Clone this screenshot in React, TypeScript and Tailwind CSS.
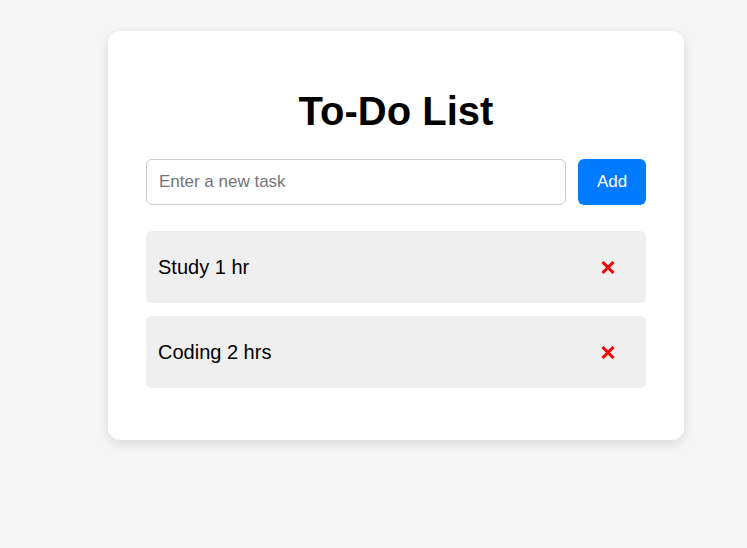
import { useState } from 'react';

const initialTasks = ['Study 1 hr', 'Coding 2 hrs'];

export default function App() {
  const [tasks, setTasks] = useState<string[]>(initialTasks);
  const [text, setText] = useState('');

  const addTask = () => {
    if (!text.trim()) return;
    setTasks([...tasks, text.trim()]);
    setText('');
  };

  return (
    <div className="min-h-[548px] bg-[#f6f6f6] pt-[31px] font-['Liberation_Sans',Arial,sans-serif] text-black">
      <div className="ml-[108px] w-[576px] rounded-xl bg-white px-[38px] pt-[57px] pb-[52px] shadow-[0_4px_12px_rgba(0,0,0,0.12)]">
        <h1 className="mb-[25px] text-center text-[40px] font-bold leading-[46px]">To-Do List</h1>

        <div className="mb-[26px] flex gap-3">
          <input
            value={text}
            onChange={(e) => setText(e.target.value)}
            placeholder="Enter a new task"
            className="h-[46px] flex-1 rounded-md border border-[#cccccc] bg-white px-3 text-[17px] outline-none placeholder:text-[#757575]"
          />
          <button
            onClick={addTask}
            className="h-[46px] w-[68px] rounded-md bg-[#007bff] text-[17px] text-white"
          >
            Add
          </button>
        </div>

        <ul className="flex flex-col gap-[13px]">
          {tasks.map((task, i) => (
            <li
              key={i}
              className="flex h-[72px] items-center justify-between rounded-md bg-[#efefef] pl-3 pr-[31px] text-[20px]"
            >
              <span>{task}</span>
              <button
                onClick={() => setTasks(tasks.filter((_, j) => j !== i))}
                className="flex h-[14px] w-[14px] items-center justify-center"
              >
                <svg width="14" height="13" viewBox="0 0 14 13">
                  <path d="M1.5 1 L12.5 12 M12.5 1 L1.5 12" stroke="#ff0000" strokeWidth="3" strokeLinecap="butt" />
                </svg>
              </button>
            </li>
          ))}
        </ul>
      </div>
    </div>
  );
}
